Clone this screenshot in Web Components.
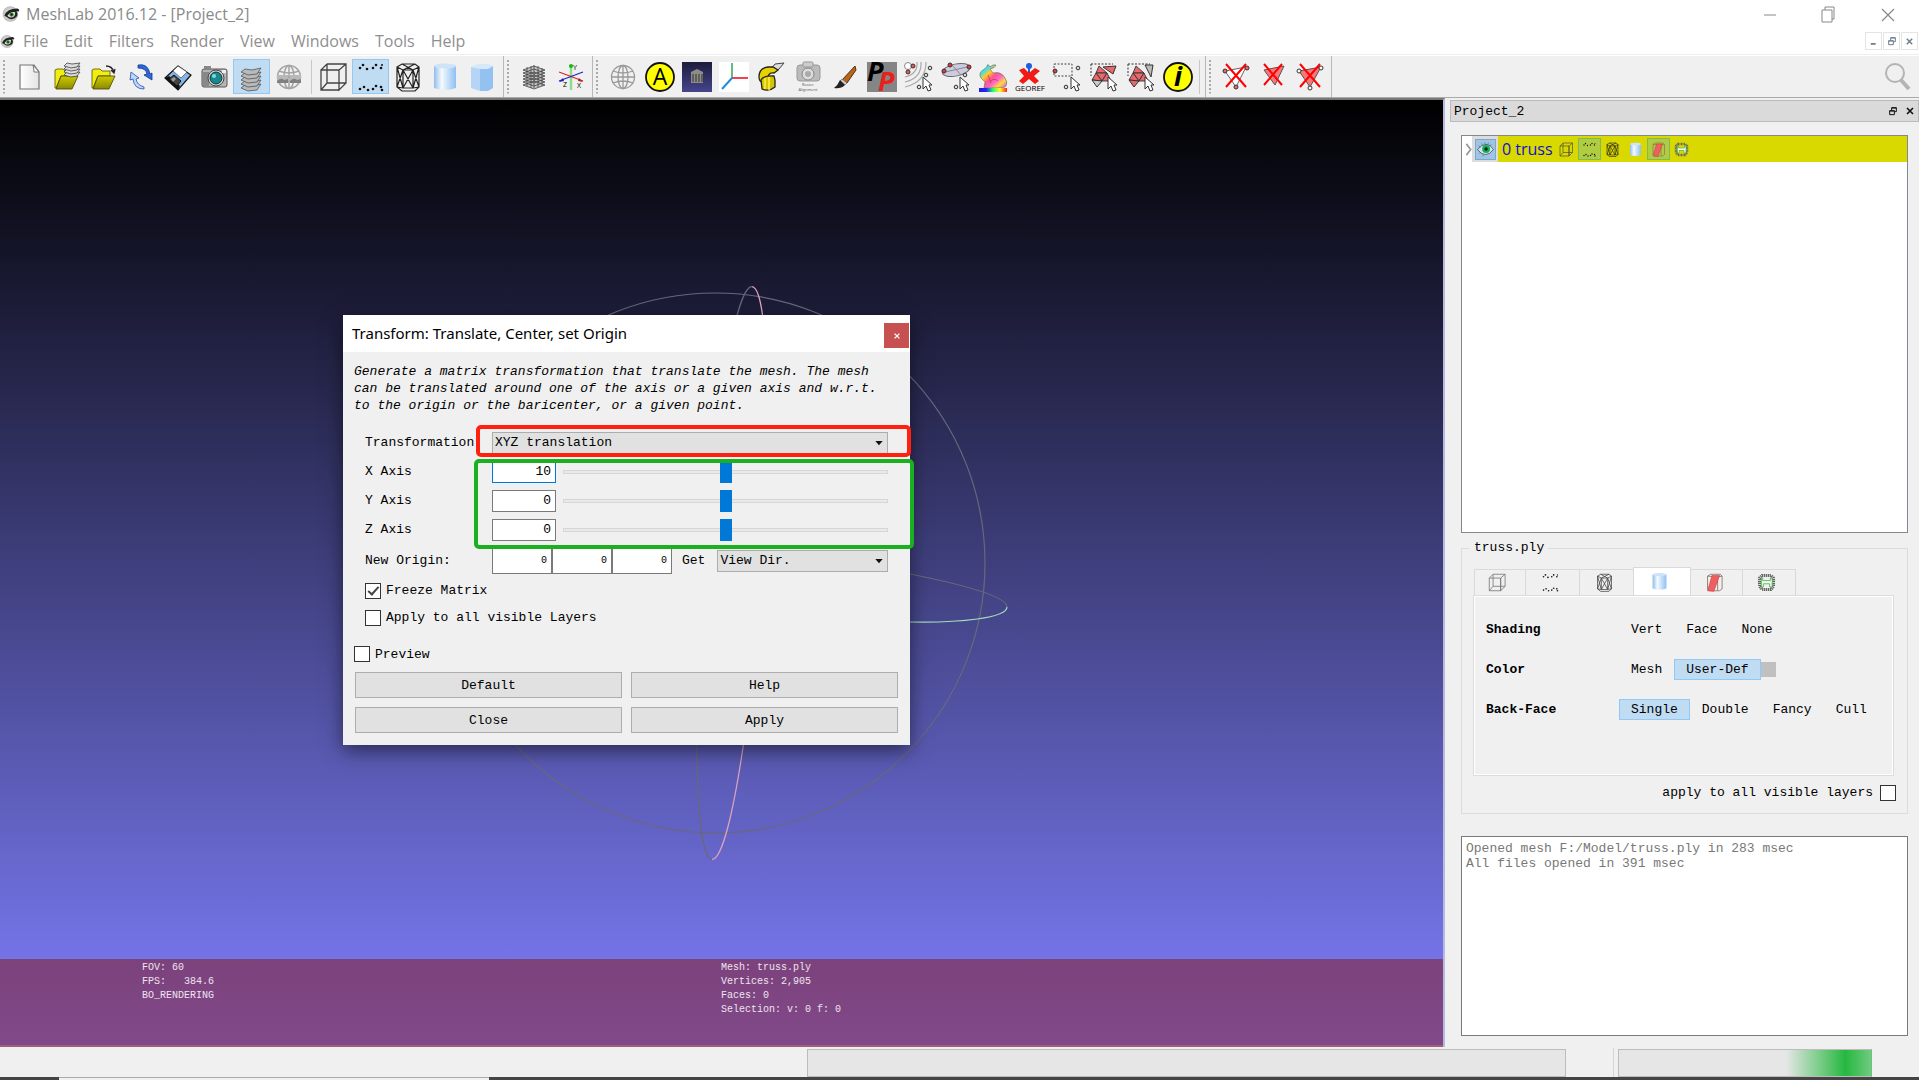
<!DOCTYPE html>
<html lang="en">
<head>
<meta charset="utf-8">
<title>MeshLab 2016.12 - [Project_2]</title>
<style>
html, body { margin: 0; height: 100%; }
body { background: #f0f0f0; overflow: hidden; }
</style>
</head>
<body>
<mesh-app></mesh-app>
<script>
const define = (name, html, setup) => customElements.define(name, class extends HTMLElement {
  connectedCallback() {
    if (this.shadowRoot) return;
    const root = this.attachShadow({ mode: 'open' });
    const t = document.createElement('template');
    t.innerHTML = typeof html === 'function' ? html(this) : html;
    root.append(t.content.cloneNode(true));
    if (setup) setup(this, root);
  }
});

const cursor = '<path d="M19 15v12l3-3 2 5 3-1-2-5h3z" fill="#fff" stroke="#333" stroke-width="1"/>';
const sheets = [0, 1, 2, 3, 4].map(i => `<path d="M4 ${26 - i * 4}l4-3 7 1 9-2-4 6-9 1z" fill="#b9b9b9" stroke="#555" stroke-width=".8"/>`).join('');
const cube = (c) => `<path d="M2 8h18v20H2zM8 2h19v19l-7 7V8l7-6M8 2L2 8M8 2v19h19M8 21l-6 7" fill="none" stroke="${c}" stroke-width="1.300"/>`;
const dots = '<g fill="#111"><circle cx="4" cy="6" r="1.300"/><circle cx="7" cy="3" r="1.300"/><circle cx="11" cy="7" r="1.300"/><circle cx="17" cy="6" r="1.300"/><circle cx="20" cy="3" r="1.300"/><circle cx="25" cy="6" r="1.300"/><circle cx="26" cy="3" r="1"/><circle cx="4" cy="27" r="1.300"/><circle cx="8" cy="25" r="1.300"/><circle cx="12" cy="28" r="1.300"/><circle cx="17" cy="27" r="1.300"/><circle cx="20" cy="24" r="1.300"/><circle cx="25" cy="25" r="1.300"/><circle cx="26" cy="28" r="1.300"/></g>';
const wire = (c, w) => `<path d="M4 5l5-3h13l4 3v20l-4 4H9l-5-4zM4 5l6 3h10l6-3M10 8v18h10V8M4 25l6 1M26 25l-6 1M4 5l6 21M10 8l-6 17M10 8l10 18M20 8L10 26M20 8l6 17M26 5l-6 21M9 2l11 6M22 2L10 8" fill="none" stroke="${c}" stroke-width="${w}"/>`;
const globe = '<circle cx="15" cy="15" r="11.500" fill="none"/><ellipse cx="15" cy="15" rx="5" ry="11.500" fill="none"/><path d="M3.500 15h23M5 9q10 4 20 0M5 21q10-4 20 0M15 3v24" fill="none"/>';
const folder = '<path d="M3 8l2-1h6l2 2h8v5H9L4 26H3z" fill="#f0ee10" stroke="#555000" stroke-width=".8"/><path d="M9 14h17l-6 13H4z" fill="url(#fo)" stroke="#444000" stroke-width=".8"/><defs><linearGradient id="fo" x2="0" y2="1"><stop offset="0" stop-color="#cfcb00"/><stop offset="1" stop-color="#8c8900"/></linearGradient></defs>';
const poly = '<path d="M2 2h22M2 2v12" stroke="#333" stroke-dasharray="2 1.500" fill="none"/><g fill="#e8686c" stroke="#333" stroke-width=".9"><path d="M10 4l8 7H7z"/><path d="M7 11h11l-5 8z"/><path d="M7 11L3 18l10 1z"/><path d="M18 11l4 8h-9z"/></g>';
const ICONS = {
  logo: '<defs><radialGradient id="g"><stop offset="0" stop-color="#fff"/><stop offset="1" stop-color="#b8b8b8"/></radialGradient></defs><circle cx="14" cy="15" r="13" fill="url(#g)"/><path d="M4 18Q8 6 26 6q4 2 2 5l-4-1q5 8-3 12-8 4-13-2z" fill="#222"/><path d="M9 18q5-8 13-6 0 9-7 9-4 0-6-3z" fill="#d8e8d0"/><circle cx="16" cy="16" r="3.500" fill="#2e7d32"/><circle cx="16" cy="16" r="1.500" fill="#111"/>',
  new: '<defs><linearGradient id="g"><stop offset="0" stop-color="#fff"/><stop offset="1" stop-color="#e4e4e4"/></linearGradient></defs><path d="M5 3h14l5 7v17H5z" fill="url(#g)" stroke="#777" stroke-width="1.200"/><path d="M18 3q1 4 1 7h5z" fill="#fff" stroke="#777"/>',
  openproj: folder + '<g fill="#ddd" stroke="#444" stroke-width=".8"><path d="M12 13l3-3 5 1 8-1-3 4-6 1z"/><path d="M12 10l3-3 5 1 8-1-3 4-6 1z"/><path d="M12 7l3-3 5 1 8-1-3 4-6 1z"/><path d="M12 4l3-3 5 1 8-1-3 4-6 1z"/></g>',
  open: folder + '<path d="M17 4q6 0 8 6M22 8l3 3 1-4" fill="none" stroke="#222" stroke-width="1.300"/>',
  reload: '<path d="M12 3q10-2 12 9l2-1v7l-8-5 3-1q-1-6-9-6z" fill="#2f66d8" stroke="#123a94" stroke-width=".8"/><path d="M18 27Q8 27 7 17l-3 1 1-8 8 6-3 1q1 6 8 8z" fill="#bcd6f8" stroke="#2450b0" stroke-width=".8"/>',
  save: '<path d="M2 16L15 4l13 9-13 15z" fill="#86b6e6" stroke="#111" stroke-width="1.200"/><path d="M10 9l5-5 9 6-6 6z" fill="#fff" stroke="#333" stroke-width=".6"/><path d="M2 16l4-2 11 10-2 4z" fill="#111"/><path d="M6 17l5-4 7 6-4 5z" fill="#444" stroke="#111"/><path d="M8 17l3-2 2 2-3 3z" fill="#999"/>',
  camera: '<rect x="2" y="7" width="25" height="18" rx="2" fill="#b5b5b5" stroke="#555"/><rect x="4" y="4" width="7" height="3" fill="#888"/><rect x="3" y="10" width="6" height="14" fill="#888"/><circle cx="16" cy="16" r="8" fill="#ddd" stroke="#444"/><circle cx="16" cy="16" r="6" fill="#17888c" stroke="#133"/><circle cx="14" cy="14" r="2" fill="#7fdcdc"/><rect x="22" y="8" width="4" height="3" fill="#eee"/>',
  layers: sheets,
  globe: `<g stroke="#999" stroke-width="1.300">${globe}</g>`,
  raster: `<g stroke="#a4a4a4" stroke-width="1.500">${globe}</g><rect x="3" y="13" width="11" height="8" fill="#b8b8b8"/><rect x="16" y="13" width="11" height="8" fill="#b8b8b8"/><path d="M3 19q4-4 7-1l4-1v4H3zM16 19q4-4 7-1l4-1v4H16z" fill="#808080"/>`,
  cube: cube('#444'), cubeLight: cube('#777'), dots, wire: wire('#222', 1.2), wireLight: wire('#444', 1.2),
  smooth: '<defs><linearGradient id="g"><stop offset="0" stop-color="#8fbdec"/><stop offset=".35" stop-color="#f4faff"/><stop offset="1" stop-color="#8ec0f2"/></linearGradient></defs><path d="M4 4q11-3 22 0v22q-11 4-22 0z" fill="url(#g)"/><ellipse cx="15" cy="4" rx="11" ry="2.500" fill="#cfe3f8"/>',
  flat: '<path d="M4 5h9v24l-9-3z" fill="#b4d5f6"/><path d="M13 7l13-3v22l-5 3h-8z" fill="#94c2f0"/><path d="M4 5l7-3h10l5 2-5 3h-8z" fill="#d6e9fb"/>',
  red: '<path d="M4 5l5-3h15l3 3v20l-4 3H6l-2-3zM20 6v21M4 5l16 1 7-1" fill="none" stroke="#8a6a5a" stroke-width="1.300"/><path d="M11 4h12l-9 25-10-1z" fill="#ef5f5f" stroke="#b33" stroke-width=".8"/>',
  boundary: '<path d="M8 4h14l4 4v13l-4 5H8l-4-5V8z" fill="none" stroke="#666" stroke-width="5" stroke-dasharray="2 1"/><path d="M9 8v4h12V8h3v14h-4v-5H10v5H7V8z" fill="#efe" stroke="#3ba63b" stroke-width="1.200"/>',
  grid: '<g fill="#999" fill-opacity=".5" stroke="#444" stroke-width=".8"><path d="M4 8l11-4 11 4-11 4zM4 11l11-4 11 4-11 4zM4 14l11-4 11 4-11 4zM4 17l11-4 11 4-11 4zM4 20l11-4 11 4-11 4zM4 23l11-4 11 4-11 4z"/><path d="M8 5v19M12 4v22M15 3v23M19 4v21M23 6v18"/></g>',
  axes: '<path d="M15 3v25" stroke="#8fdc8f" stroke-width="2.500"/><path d="M3 10l24 9" stroke="#d22" stroke-width="1.200"/><path d="M27 10L3 19" stroke="#22c" stroke-width="1.200"/><circle cx="15" cy="4" r="2" fill="#1b1"/><path d="M27 20l-4-4-1 3z" fill="#a22"/><path d="M3 20l4-4 1 3z" fill="#22a"/><text x="17" y="8" font-size="7">Y</text><text x="7" y="25" font-size="7">Z</text><text x="21" y="26" font-size="7">X</text>',
  a: '<circle cx="15" cy="15" r="14" fill="#ff0" stroke="#111" stroke-width="1.800"/><text x="15" y="23" font-size="23" text-anchor="middle" font-family="Liberation Serif">A</text>',
  temple: '<defs><linearGradient id="g" x2="0" y2="1"><stop offset="0" stop-color="#1c1c3c"/><stop offset="1" stop-color="#45458c"/></linearGradient></defs><path d="M0 0h30v30H0z" fill="url(#g)"/><path d="M9 10l6-3 6 3v11H9z" fill="#8e8c86"/><path d="M11 12v8M14 12v8M17 12v8M20 12v8" stroke="#333"/>',
  axis3: '<path d="M0 0h30v30H0z" fill="#fff"/><path d="M13 17V1" stroke="#2fa65a" stroke-width="1.500"/><path d="M13 16h16" stroke="#f22b3a" stroke-width="1.800"/><path d="M13 16L3 27" stroke="#1c8fe0" stroke-width="2"/>',
  tape: '<path d="M14 8l5-6 9-1-5 6-6 3z" fill="#ddd" stroke="#444"/><path d="M3 15Q3 6 12 5h5l5 3-4 3q-5-1-6 4-1 4-5 5-4 0-4-5z" fill="#e6d200" stroke="#222" stroke-width="1.300"/><path d="M5 18q3-5 13-4l1 4v7q-6 5-13 2z" fill="#d6c400" stroke="#222" stroke-width="1.300"/><path d="M9 16v11M13 15v13" stroke="#fff04a" stroke-width="1.500"/>',
  rastercam: '<rect x="4" y="3" width="23" height="16" rx="3" fill="#bbb" stroke="#999"/><rect x="10" y="0" width="10" height="5" rx="1" fill="#ccc" stroke="#999"/><circle cx="15" cy="12" r="6" fill="#ddd" stroke="#888"/><circle cx="15" cy="12" r="3" fill="#aaa"/><text x="15" y="24" font-size="4" text-anchor="middle" fill="#555">Raster</text><text x="15" y="29" font-size="4" text-anchor="middle" fill="#555">Alignment</text>',
  brush: '<path d="M25 4l1 4-9 13-5-3z" fill="#b5651d" stroke="#5c2e08"/><path d="M12 17l5 4-2 2-5-4z" fill="#ccc" stroke="#666" stroke-width=".6"/><path d="M10 18l5 5q-4 4-11 3 4-3 6-8z" fill="#222"/>',
  pp: '<path d="M0 0h30v30H0z" fill="#858585"/><text x="0" y="19" font-size="27" font-weight="bold" font-style="italic" font-family="Liberation Serif">P</text><text x="11" y="29" font-size="27" font-weight="bold" font-style="italic" font-family="Liberation Serif" fill="#e8201c">P</text>',
  waves: '<g fill="none" stroke="#aaa" stroke-width="1.200"><path d="M13 0Q14 12 1 15M17 0Q18 16 1 20M22 0Q22 20 1 25"/></g><circle cx="4" cy="4" r="3.500" fill="#fff" stroke="#888"/><circle cx="9" cy="4" r="2" fill="#e55" stroke="#333"/><circle cx="4" cy="10" r="2" fill="#e55" stroke="#333"/><circle cx="26" cy="6" r="1.800" fill="#ddd" stroke="#333"/><circle cx="22" cy="13" r="1.800" fill="#ddd" stroke="#333"/><circle cx="15" cy="25" r="1.800" fill="#ddd" stroke="#333"/>' + cursor,
  lasso: '<ellipse cx="15" cy="8" rx="14" ry="6" transform="rotate(-12 15 8)" fill="#ccd" stroke="#667"/><path d="M11 3l9 10M4 10l22-5" stroke="#889"/><circle cx="3" cy="9" r="2" fill="#e33" stroke="#333"/><circle cx="9" cy="3" r="2" fill="#e33" stroke="#333"/><circle cx="28" cy="5" r="2" fill="#e33" stroke="#333"/><circle cx="24" cy="13" r="1.800" fill="#ddd" stroke="#333"/><circle cx="15" cy="25" r="1.800" fill="#ddd" stroke="#333"/>' + cursor,
  bunny: '<defs><linearGradient id="g" y2="1"><stop offset="0" stop-color="#2e6"/><stop offset=".22" stop-color="#4de"/><stop offset=".35" stop-color="#fc2"/><stop offset=".5" stop-color="#f58"/><stop offset=".65" stop-color="#f6c"/><stop offset=".8" stop-color="#fd3"/><stop offset="1" stop-color="#c4f"/></linearGradient><linearGradient id="r"><stop offset="0" stop-color="#22c"/><stop offset=".25" stop-color="#22f"/><stop offset=".5" stop-color="#2f6"/><stop offset=".75" stop-color="#ff2"/><stop offset="1" stop-color="#f22"/></linearGradient></defs><path d="M9 5Q9 0 12 5q3-3 6-2-1 3-6 4l3 4q8-2 12 5 3 4 1 8l-3 2H6l1-6-4-4Q0 11 5 8z" fill="url(#g)" stroke="#666" stroke-width=".6"/><path d="M12 20q4-5 8-1M10 13l3 8" fill="none" stroke="#a36" stroke-width=".7"/><path d="M1 26h28v4H1z" fill="url(#r)"/>',
  georef: '<circle cx="14" cy="4" r="3" fill="#1d5fe0"/><path d="M14 5v6" stroke="#1d5fe0" stroke-width="2"/><path d="M4 8l5-2 5 5 6-5 5 3-6 5 5 5-4 3-6-5-6 5-4-3 5-5z" fill="#f21a12"/><text x="15" y="29" font-size="8" text-anchor="middle">GEOREF</text>',
  selvert: '<path d="M2 2h18v12H2z" fill="none" stroke="#444" stroke-dasharray="2 1.500"/><circle cx="3" cy="9" r="2" fill="#e33" stroke="#333"/><circle cx="26" cy="6" r="1.800" fill="#ddd" stroke="#333"/><circle cx="14" cy="25" r="1.800" fill="#ddd" stroke="#333"/>' + cursor,
  selface: poly + '<path d="M3 18l10 1-5 6z" fill="#ccc" stroke="#333"/><path d="M14 5l13-1-3 8z" fill="#e8686c" stroke="#333"/>' + cursor,
  selface2: poly + '<path d="M3 18l10 1-5 6z" fill="#e8686c" stroke="#333"/><path d="M19 3h8l-2 12z" fill="#bbb" stroke="#333"/>' + cursor,
  info: '<circle cx="15" cy="15" r="14" fill="#ff0" stroke="#111" stroke-width="1.800"/><text x="15" y="24" font-size="27" text-anchor="middle" font-weight="bold" font-style="italic" font-family="Liberation Serif">i</text>',
  delvert: '<path d="M4 9l21-4-10 20z" fill="#fff" stroke="#666"/><circle cx="4" cy="9" r="2" fill="#e66" stroke="#333"/><circle cx="26" cy="6" r="2" fill="#e66" stroke="#333"/><circle cx="15" cy="25" r="2" fill="#e66" stroke="#333"/><path d="M5 2l20 23M25 2L5 25" stroke="#f00" stroke-width="2"/>',
  delface: '<path d="M6 8l20-4-9 19z" fill="#f87878" stroke="#555"/><path d="M6 2l18 21M24 2L6 23" stroke="#f00" stroke-width="2"/>',
  delboth: '<path d="M4 9l22-4-11 20z" fill="#f87878" stroke="#555"/><circle cx="4" cy="9" r="2" fill="#fff" stroke="#333"/><circle cx="26" cy="6" r="2" fill="#fff" stroke="#333"/><circle cx="15" cy="26" r="2" fill="#fff" stroke="#333"/><path d="M5 2l20 23M25 2L5 25" stroke="#f00" stroke-width="2"/>',
  search: '<circle cx="13" cy="11" r="9" fill="none" stroke="#b4b4b4" stroke-width="2"/><path d="M19 18l8 9" stroke="#b4b4b4" stroke-width="4"/>',
  eye: '<path d="M1 15Q8 6 16 6t13 9q-6 9-14 9T1 15z" fill="#d5e6e6" stroke="#456" stroke-width="1.500"/><path d="M3 8l3 4M8 4l2 4M14 2v4M20 3l-1 4M25 6l-2 3M4 22l3-2M10 27l1-3" stroke="#456"/><circle cx="16" cy="14" r="7" fill="#14b05c"/><circle cx="16" cy="14" r="3" fill="#021"/>',
  min: '<path d="M9 15h12" stroke="#888"/>',
  max: '<path d="M9 10h10v12H9zM12 10V7h9v12h-2" fill="none" stroke="#888"/>',
  close: '<path d="M9 9l12 12M21 9L9 21" stroke="#888" stroke-width="1.200"/>',
  mmin: '<path d="M6 23h16" stroke="currentColor" stroke-width="6"/>',
  mrest: '<path d="M5 14h14v12H5zM5 15h14M11 12V5h14v12h-5M11 6h14" fill="none" stroke="currentColor" stroke-width="3"/>',
  mclose: '<path d="M6 6l18 18M24 6L6 24" stroke="currentColor" stroke-width="5"/>',
  chev: '<path d="M10 2l10 13-10 13" fill="none" stroke="#999" stroke-width="4"/>',
  arrow: '<path d="M4 9h22L15 22z" fill="#111"/>'
};
define('mesh-icon', el => `<style>:host{display:block;flex:none;width:${el.getAttribute('size') || 30}px;height:${el.getAttribute('size') || 30}px}svg{display:block;width:100%;height:100%;overflow:visible}text{font-family:"Open Sans","Noto Sans",sans-serif}</style><svg viewBox="0 0 30 30" aria-hidden="true">${ICONS[el.getAttribute('name')]}</svg>`);

define('title-bar', `<style>
:host{display:flex;height:28px;align-items:center;background:#fff;color:#8a8a8a;font:16px "Open Sans","Noto Sans",sans-serif;padding-left:2px}
h1{font:inherit;margin:0 0 0 6px;flex:1}
button{width:58px;height:28px;border:0;background:none;padding:0;display:grid;place-items:center}
button:last-child{width:62px}
</style><mesh-icon name="logo" size="18"></mesh-icon><h1>MeshLab 2016.12 - [Project_2]</h1>
<button aria-label="Minimize"><mesh-icon name="min"></mesh-icon></button><button aria-label="Restore"><mesh-icon name="max"></mesh-icon></button><button aria-label="Close"><mesh-icon name="close"></mesh-icon></button>`);

define('menu-bar', `<style>
:host{display:flex;height:26px;align-items:center;background:#fff;border-bottom:1px solid #eee}
nav{display:flex;flex:1}
nav button{border:0;background:none;color:#8f8f8f;font:16px/22px "Open Sans","Noto Sans",sans-serif;padding:0 8px}
.w{border:1px solid #e4e4e4;background:#fff;width:17px;height:18px;margin-right:1px;padding:0;display:grid;place-items:center;color:#6d7d8f}
</style><mesh-icon name="logo" size="15"></mesh-icon><nav>${['File', 'Edit', 'Filters', 'Render', 'View', 'Windows', 'Tools', 'Help'].map(m => `<button>${m}</button>`).join('')}</nav>
<button class="w" aria-label="Minimize project"><mesh-icon name="mmin" size="9"></mesh-icon></button><button class="w" aria-label="Restore project"><mesh-icon name="mrest" size="10"></mesh-icon></button><button class="w" aria-label="Close project"><mesh-icon name="mclose" size="9"></mesh-icon></button>`);

define('tool-group', el => `<style>
:host{display:flex;align-items:center;height:41px;border-right:1px solid #b8b8b8;padding-right:3px}
.grip{width:3px;height:34px;margin:0 5px 0 3px;background:repeating-linear-gradient(#aaa 0 2px,transparent 2px 4px);clip-path:inset(0 1px 0 0)}
button{width:37px;height:35px;box-sizing:border-box;border:1px solid transparent;background:none;padding:0;display:grid;place-items:center}
button.on{background:#c0dcf3;border-color:#90c8f6}
.sep{width:1px;height:34px;background:#c8c8c8;margin:0 3px 0 4px}
.sep:last-child{margin:0 2px 0 3px}
</style><span class="grip"></span>${el.getAttribute('tools').split(' ').map(n => n === '|' ? '<span class="sep"></span>' : `<button class="${n.endsWith('*') ? 'on' : ''}" aria-label="${n.replace('*', '')}"><mesh-icon name="${n.replace('*', '')}"></mesh-icon></button>`).join('')}`);

define('tool-bar', `<style>
:host{display:flex;align-items:center;height:41px;background:#f0f0f0;border-top:1px solid #fff;border-bottom:1px solid #aaa}
.find{margin-left:auto;margin-right:7px;border:0;background:none;padding:0}
</style><tool-group tools="new openproj open reload save camera layers* raster | cube dots* wire smooth flat"></tool-group>
<tool-group tools="grid axes"></tool-group>
<tool-group tools="globe a temple axis3 tape rastercam brush pp waves lasso bunny georef selvert selface selface2 info |"></tool-group>
<tool-group tools="delvert delface delboth"></tool-group>
<button class="find" aria-label="Search"><mesh-icon name="search"></mesh-icon></button>`);

define('combo-box', el => `<style>
:host{display:grid;height:22px}
select{grid-area:1/1;appearance:none;width:100%;height:22px;box-sizing:border-box;border:1px solid #adadad;border-radius:0;background:#e1e1e1;font:13px "Liberation Mono",monospace;color:#000;padding:0 20px 0 2px;margin:0}
mesh-icon{grid-area:1/1;place-self:center end;margin-right:4px;pointer-events:none}
</style><select aria-label="${el.getAttribute('label')}"><option>${el.getAttribute('value')}</option></select><mesh-icon name="arrow" size="10"></mesh-icon>`);

define('check-row', el => `<style>
:host{display:block}
label{display:flex;align-items:center;gap:5px;height:100%}
:host([end]) label{flex-direction:row-reverse;gap:7px}
input{appearance:none;margin:0;width:16px;height:16px;box-sizing:border-box;border:1px solid #333;background:#fff;flex:none;display:grid;place-items:center}
input:checked::before{content:"";width:9px;height:4px;border-left:2px solid #444;border-bottom:2px solid #444;transform:rotate(-48deg) translate(1px,-1px)}
</style><label><input type="checkbox" ${el.hasAttribute('checked') ? 'checked' : ''}><span><slot></slot></span></label>`);

define('axis-row', el => `<style>
:host{display:grid;grid-template-columns:127px 64px 1fr;align-items:center;height:29px}
.n{width:64px;height:22px;box-sizing:border-box;border:1px solid #7a7a7a;background:#fff;font:13px "Liberation Mono",monospace;text-align:right;padding:0 4px}
:host([active]) .n{border-color:#0078d7}
.r{appearance:none;width:auto;margin:0 0 0 7px;height:22px;background:none}
.r::-webkit-slider-runnable-track{height:4px;box-sizing:border-box;border:1px solid #d6d6d6;background:#e7eaea}
.r::-webkit-slider-thumb{appearance:none;width:12px;height:22px;margin-top:-10px;background:#0078d7;border-radius:0}
</style><label for="n">${el.getAttribute('axis')} Axis</label><input id="n" class="n" value="${el.getAttribute('value')}"><input class="r" type="range" value="50" aria-label="${el.getAttribute('axis')} slider">`);

define('transform-dialog', `<style>
:host{display:block;width:567px;background:#f0f0f0;color:#000;font:13px/17px "Liberation Mono",monospace;box-shadow:0 6px 18px rgba(0,0,0,.5)}
header{display:flex;align-items:center;height:37px;background:#fff;padding:0 1px 0 9px}
h2{flex:1;margin:0 0 2px;font:15px "Noto Sans","Open Sans",sans-serif}
header button{width:25px;height:25px;border:0;padding:0;background:#c75050;color:#fff;display:grid;place-items:center;margin-top:4px}
.desc{margin:0;padding:11px 12px 14px 11px;font-style:italic;white-space:nowrap}
.form{padding:0 22px;position:relative}
.row{display:grid;grid-template-columns:127px 1fr;align-items:center;height:29px}
.origin{display:flex;align-items:center;height:33px}
.origin>label{width:127px}
.origin input{width:60px;height:27px;box-sizing:border-box;border:1px solid #7a7a7a;background:#fff;font:10px "Liberation Mono",monospace;text-align:right;padding:0 4px;margin:0}
.origin span{margin:0 12px 0 10px}
.origin combo-box{flex:1}
.form check-row{height:27px}
.preview{height:28px;margin:9px 11px 4px}
.btns{display:grid;grid-template-columns:1fr 1fr;gap:9px;padding:0 12px 12px}
.btns button{height:26px;border:1px solid #adadad;background:#e1e1e1;font:inherit;color:#000;padding:0}
.mark{position:absolute;box-sizing:border-box;border:4px solid;border-radius:5px;pointer-events:none}
.mark.r{left:133px;right:-1px;top:-3px;height:32px;border-color:#ff2010}
.mark.g{left:131px;right:-4px;top:31px;height:90px;border-color:#1ab020}
</style>
<header><h2>Transform: Translate, Center, set Origin</h2><button aria-label="Close dialog"><mesh-icon name="mclose" size="8"></mesh-icon></button></header>
<p class="desc">Generate a matrix transformation that translate the mesh. The mesh<br>can be translated around one of the axis or a given axis and w.r.t.<br>to the origin or the baricenter, or a given point.</p>
<div class="form">
<div class="row"><span>Transformation:</span><combo-box label="Transformation" value="XYZ translation"></combo-box></div>
<axis-row axis="X" value="10" active></axis-row><axis-row axis="Y" value="0"></axis-row><axis-row axis="Z" value="0"></axis-row>
<div class="origin"><label for="ox">New Origin:</label><input id="ox" value="0"><input aria-label="Origin Y" value="0"><input aria-label="Origin Z" value="0"><span>Get</span><combo-box label="Get" value="View Dir."></combo-box></div>
<check-row checked>Freeze Matrix</check-row><check-row>Apply to all visible Layers</check-row>
<div class="mark r"></div><div class="mark g"></div>
</div>
<check-row class="preview">Preview</check-row>
<div class="btns"><button>Default</button><button>Help</button><button>Close</button><button>Apply</button></div>`);

define('mesh-viewport', `<style>
:host{display:flex;flex-direction:column;position:relative;flex:1;min-width:0;background:linear-gradient(#000,#8080ff);border-top:2px solid #777;border-right:2px solid #b9b9dd;font:10px/14px "Liberation Mono",monospace;color:#f0e4f0}
.scene{flex:1;min-height:0;position:relative}
svg{display:block;position:absolute;inset:0;width:100%;height:100%}
.info{height:88px;box-sizing:border-box;display:flex;background:linear-gradient(#7b427c,#814989);border-bottom:2px solid #a0607c}
pre{font:inherit;margin:0;padding-top:2px}
pre:first-child{flex:0 0 579px;margin-left:142px}
transform-dialog{position:absolute;left:343px;top:215px}
</style>
<div class="scene"><svg viewBox="0 0 1443 859" fill="none" stroke="#68687c" stroke-width="1.200"><circle cx="715" cy="463" r="270"/><g transform="rotate(4 732 473)"><path d="M732 186A29 287 0 0 0 732 760"/><path d="M732 186A29 287 0 0 1 732 760" stroke="#dca4bc"/></g><path d="M910 474C960 484 1007 496 1007 507"/><path d="M1007 507C1007 518 960 523 910 522" stroke="#a4dcb8"/></svg></div>
<div class="info"><pre>FOV: 60
FPS:   384.6
BO_RENDERING</pre><pre>Mesh: truss.ply
Vertices: 2,905
Faces: 0
Selection: v: 0 f: 0</pre></div>
<transform-dialog></transform-dialog>`);

define('layer-tree', `<style>
:host{display:block;box-sizing:border-box;border:1px solid #828790;background:#fff}
.row{display:flex;align-items:center;height:26px;background:#d9d900}
.exp{display:grid;place-items:center;width:10px;height:26px;background:#fff}
.eye{display:grid;place-items:center;width:26px;height:26px;background:#dcdcdc}
.eye span{display:block;background:#9fc4e4;border:1px solid #7ba8d0;padding:1px}
.name{font:16px "Open Sans","Noto Sans",sans-serif;color:#1010d0;padding:0 0 0 4px;width:57px;box-sizing:border-box;white-space:nowrap}
.i{width:23px;height:22px;box-sizing:border-box;display:grid;place-items:center;border:1px solid transparent}
.i.on{background:#b0cc40;border-color:#80b860}
.icons{display:flex}
</style><div class="row"><span class="exp"><mesh-icon name="chev" size="13"></mesh-icon></span><span class="eye"><span><mesh-icon name="eye" size="17"></mesh-icon></span></span><span class="name">0 truss</span>
<span class="icons"><span class="i"><mesh-icon name="cube" size="15"></mesh-icon></span><span class="i on"><mesh-icon name="dots" size="15"></mesh-icon></span><span class="i"><mesh-icon name="wire" size="15"></mesh-icon></span><span class="i"><mesh-icon name="smooth" size="15"></mesh-icon></span><span class="i on"><mesh-icon name="red" size="15"></mesh-icon></span><span class="i"><mesh-icon name="boundary" size="15"></mesh-icon></span></span></div>`);

define('option-row', el => `<style>
:host{display:grid;grid-template-columns:133px 1fr;align-items:center;height:40px}
b{font-weight:bold}
div{display:flex;align-items:center}
button{height:21px;border:1px solid transparent;background:none;padding:0 11px;font:13px "Liberation Mono",monospace;color:#000;white-space:nowrap}
button.on{background:#c0dcf3;border-color:#90c8f6}
i{width:15px;height:15px;background:#c0c0c0}
</style><b>${el.getAttribute('label')}</b><div>${el.getAttribute('options').split(' ').map(o => `<button class="${o.endsWith('*') ? 'on' : ''}">${o.replace('*', '')}</button>`).join('')}${el.hasAttribute('swatch') ? '<i></i>' : ''}</div>`);

define('render-panel', `<style>
:host{display:block}
fieldset{margin:0;padding:11px 13px 12px 11px;border:1px solid #dcdcdc;min-width:0}
legend{margin:0 0 0 -4px;padding:0 4px 0 5px;line-height:16px}
.tabs{display:flex;align-items:flex-end;height:28px;margin-left:1px}
.tabs button{height:26px;width:54px;box-sizing:border-box;border:1px solid #d9d9d9;border-bottom:0;border-right:0;background:#f0f0f0;padding:0 5px 0 0;display:grid;place-items:center}
.tabs button:first-child{width:51px}
.tabs button:last-child{border-right:1px solid #d9d9d9}
.tabs .on{height:28px;width:58px;background:#fff;border-right:1px solid #d9d9d9}
.tabs .on+button{width:51px;border-left:0}
.body{border:1px solid #dcdcdc;box-shadow:inset 0 0 0 1px #fff;height:181px;box-sizing:border-box;padding:13px 0 0 12px}
check-row{height:17px;margin-top:8px;margin-right:-2px}
</style><fieldset><legend>truss.ply</legend>
<div class="tabs"><button aria-label="Box"><mesh-icon name="cubeLight" size="19"></mesh-icon></button><button aria-label="Points"><mesh-icon name="dots" size="19"></mesh-icon></button><button aria-label="Wireframe"><mesh-icon name="wireLight" size="19"></mesh-icon></button><button class="on" aria-label="Solid"><mesh-icon name="smooth" size="19"></mesh-icon></button><button aria-label="Selection"><mesh-icon name="red" size="19"></mesh-icon></button><button aria-label="Boundary"><mesh-icon name="boundary" size="19"></mesh-icon></button></div>
<div class="body"><option-row label="Shading" options="Vert Face None"></option-row><option-row label="Color" options="Mesh User-Def*" swatch></option-row><option-row label="Back-Face" options="Single* Double Fancy Cull"></option-row></div>
<check-row end>apply to all visible layers</check-row></fieldset>`);

define('layer-dock', `<style>
:host{display:flex;flex-direction:column;width:469px;margin:2px 0 0 5px;font:13px/15px "Liberation Mono",monospace;color:#000;box-sizing:border-box}
header{display:flex;align-items:center;height:22px;box-sizing:border-box;background:#dadada;border:1px solid #bbb;padding:0 3px}
header span{flex:1}
header button{border:0;background:none;padding:0;margin-left:7px;color:#111}
.c{flex:1;min-height:0;display:flex;flex-direction:column;padding:13px 11px 11px 11px}
layer-tree{flex:2 1 0}
render-panel{margin:7px 0 22px}
.log{flex:1 1 0;border:1px solid #7a7a7a;background:#fff;color:#787878;box-sizing:border-box}
.log p{margin:0;padding:0 4px}
.log p:first-child{padding-top:4px}
</style><header><span>Project_2</span><button aria-label="Float"><mesh-icon name="mrest" size="10"></mesh-icon></button><button aria-label="Close panel"><mesh-icon name="mclose" size="10"></mesh-icon></button></header>
<div class="c"><layer-tree></layer-tree><render-panel></render-panel><div class="log" role="log"><p>Opened mesh F:/Model/truss.ply in 283 msec</p><p>All files opened in 391 msec</p></div></div>`);

define('status-bar', `<style>
:host{display:block;background:#f0f0f0}
.s{display:flex;height:30px;align-items:flex-end;justify-content:flex-end;padding-right:47px}
.p{height:28px;box-sizing:border-box;border:1px solid #bcbcbc;background:#e6e6e6;display:flex;justify-content:flex-end}
.a{width:759px;margin-right:47px}
.b{width:254px;border-right-color:#6ac47a}
.b i{width:85px;background:linear-gradient(90deg,#e6e6e6,#26b840 70%,#70ca80)}
.sep{width:1px;height:29px;background:#d4d4d4;margin-right:4px}
.t{height:3px;background:#444;display:flex}
.t i{width:430px;margin-left:59px;background:#f0f0f0;border-top:1px solid #aaa}
</style><div class="s"><div class="p a"></div><div class="sep"></div><div class="p b"><i></i></div></div><div class="t"><i></i></div>`);

define('mesh-app', `<style>
:host{display:flex;flex-direction:column;height:100vh;background:#f0f0f0}
main{display:flex;flex:1;min-height:0}
</style><title-bar></title-bar><menu-bar></menu-bar><tool-bar></tool-bar><main><mesh-viewport></mesh-viewport><layer-dock></layer-dock></main><status-bar></status-bar>`);
</script>
</body>
</html>
